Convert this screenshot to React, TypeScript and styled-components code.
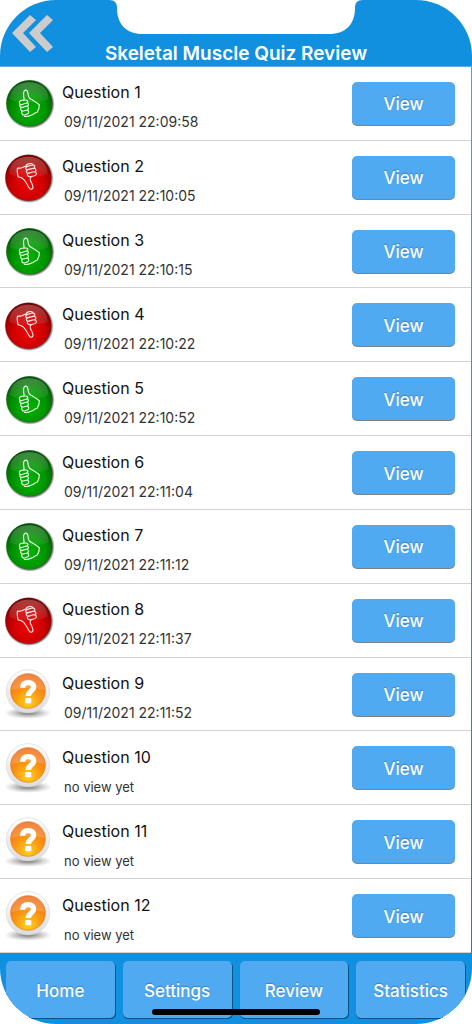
import React from "react";
import styled, { createGlobalStyle } from "styled-components";

const GlobalStyle = createGlobalStyle`
  * { box-sizing: border-box; }
  body { margin: 0; background: #fff; }
  body, button { font-family: Inter, "Liberation Sans", sans-serif; }
`;

const Screen = styled.div`
  position: relative;
  display: flex;
  flex-direction: column;
  min-height: 100vh;
  overflow: hidden;
  border-radius: 56px;
  background: #fff;
`;

const Header = styled.header`
  position: relative;
  display: flex;
  align-items: flex-end;
  justify-content: center;
  height: 67px;
  background: #1090de;
  border-bottom: 1px solid #58aee6;
`;

const Title = styled.h1`
  margin: 0;
  color: #fff;
  font-size: 19px;
  line-height: 24px;
  font-weight: 600;
  white-space: nowrap;
`;

const Notch = styled.svg`
  position: absolute;
  top: 0;
  left: 50%;
  transform: translateX(-50%);
`;

const BackButton = styled.button`
  position: absolute;
  left: 11px;
  top: 14px;
  padding: 0;
  border: 0;
  background: none;
  cursor: pointer;
  svg { display: block; }
`;

const List = styled.ul`
  display: flex;
  flex: 1;
  flex-direction: column;
  margin: 0;
  padding: 0;
  list-style: none;
  border-style: solid;
  border-width: 0 1px 0 0;
  border-image: linear-gradient(#4f9fdc, #4c6c96) 1;
`;

const Row = styled.li`
  display: flex;
  flex: 1;
  align-items: center;
  min-height: 70px;
  padding-right: 16px;
  border-bottom: 1px solid #d2d2d2;
`;

const StatusIcon = styled.svg`
  flex: none;
  width: 60px;
  height: 70px;
`;

const Details = styled.div`
  display: flex;
  flex: 1;
  flex-direction: column;
  gap: 8px;
  padding: 8px 0 0 2px;
`;

const Name = styled.span`
  color: #111;
  font-size: 16px;
  line-height: 22px;
`;

const Viewed = styled.span<{ $pending: boolean }>`
  padding-left: 2px;
  color: #333;
  font-size: ${(p) => (p.$pending ? 13 : 14)}px;
  line-height: 22px;
`;

const Button = styled.button`
  border: 0;
  border-radius: 5px;
  padding: 0;
  background: #50aaf2;
  color: #fff;
  font-size: 17px;
  font-weight: 500;
  text-shadow: 0 -1px 1px rgba(40, 90, 140, 0.5);
  cursor: pointer;
`;

const ViewButton = styled(Button)`
  width: 103px;
  height: 43px;
  padding-top: 2px;
  box-shadow: 0 1px 0 #7d8287;
`;

const Footer = styled.nav`
  display: flex;
  gap: 8px;
  height: 71px;
  padding: 8px 7px 6px 6px;
  background: #1090de;
`;

const TabButton = styled(Button)`
  flex: 1;
  padding-top: 3px;
  box-shadow: 0 1px 0 #0a5285, 1px 1px 0 #0a5285;
`;

const HomeIndicator = styled.div`
  position: absolute;
  bottom: 9px;
  left: 50%;
  width: 168px;
  height: 6px;
  border-radius: 3px;
  background: #000;
  transform: translateX(-50%);
`;

type Status = "right" | "wrong" | "open";

const Right = () => (
  <StatusIcon viewBox="0 -6 180 210" role="img" aria-label="Correct">
    <circle cx="90" cy="102" r="74" fill="url(#shade)" />
    <circle cx="88" cy="100" r="69" fill="url(#green)" />
    <path d="M30 88C31 52 58 37 88 37s57 15 58 51C117 103 59 103 30 88z" fill="url(#gloss)" />
    <g fill="none" stroke="#e8ffe8" strokeWidth="3.4" strokeLinejoin="round" strokeLinecap="round">
      <path d="M72 90c1-8-3-14-1-23 2-8 9-9 12-2 2 7 0 13 5 19 5 5 14 8 20 13l10 7c0 8-2 15-6 22-6 2-12 7-19 10-6 3-13 4-20 3" />
      <path d="M73 90c-6 0-15 2-15 8 0 5 5 7 10 5l12-4c6-3 4-9-2-9z" />
      <path d="M61 103c-4 5 0 10 6 9l14-4c7-2 5-9-1-9" />
      <path d="M63 113c-3 6 1 11 7 10l11-3c6-2 5-9 0-11" />
      <path d="M66 124c-3 6 2 12 8 11l8-3c6-2 5-9 0-12" />
    </g>
  </StatusIcon>
);

const Wrong = () => (
  <StatusIcon viewBox="0 -9 180 210" role="img" aria-label="Incorrect">
    <circle cx="87" cy="100" r="74" fill="url(#shade)" />
    <circle cx="85" cy="98" r="69" fill="url(#red)" />
    <path d="M27 86C28 50 55 35 85 35s57 15 58 51C114 101 56 101 27 86z" fill="url(#gloss)" />
    <g fill="none" stroke="#ffe8e8" strokeWidth="3.4" strokeLinejoin="round" strokeLinecap="round">
      <path d="M79 62c-6 2-10 6-16 7-4 1-7 0-11 1-1 8 0 16 2 25 6 2 12 3 17 8 7 7 11 17 17 26 3 6 12 4 11-3-1-8-6-14-8-21-1-4 0-7 2-10" />
      <path d="M92 95c-8 1-13-6-8-10l14-4c7-2 12 1 11 6-1 6-11 7-17 8z" />
      <path d="M84 85c-7-2-7-9 0-11l15-4c7-1 12 5 6 11" />
      <path d="M82 75c-6-2-7-9 0-11l14-4c8-1 11 5 6 10" />
      <path d="M79 65c-2-6 4-8 9-9 6-1 11 0 11 4" />
    </g>
  </StatusIcon>
);

const Open = () => (
  <StatusIcon viewBox="0 -2 180 210" role="img" aria-label="Not scored">
    <ellipse cx="84" cy="160" rx="72" ry="18" fill="url(#floor)" />
    <circle cx="84" cy="95" r="65" fill="url(#rim)" stroke="#d8d8d8" strokeWidth="2" />
    <circle cx="84" cy="94" r="52" fill="url(#orange)" stroke="#e47a1c" strokeWidth="2" />
    <path d="M34 92C36 60 56 44 84 44s48 16 50 48C109 83 59 83 34 92z" fill="#fff" opacity=".18" />
    <path d="M68 84c0-11 7-15 17-15s16 5 16 13c0 12-16 13-16 27" fill="none" stroke="#fff" strokeWidth="16" />
    <rect x="76" y="115" width="18" height="16" rx="3" fill="#fff" />
  </StatusIcon>
);

const icons: Record<Status, React.FC> = { right: Right, wrong: Wrong, open: Open };

const PaintDefs = styled.svg`
  position: absolute;
  width: 0;
  height: 0;
`;

const Paints = () => (
  <PaintDefs aria-hidden="true">
    <defs>
      <radialGradient id="shade">
        <stop offset=".88" stopColor="#222" stopOpacity=".9" />
        <stop offset="1" stopColor="#222" stopOpacity="0" />
      </radialGradient>
      <radialGradient id="green" cx=".5" cy=".65" r=".66">
        <stop offset="0" stopColor="#00b400" />
        <stop offset=".55" stopColor="#009400" />
        <stop offset="1" stopColor="#004c04" />
      </radialGradient>
      <radialGradient id="red" cx=".5" cy=".65" r=".66">
        <stop offset="0" stopColor="#ee0606" />
        <stop offset=".55" stopColor="#cc0000" />
        <stop offset="1" stopColor="#6c0000" />
      </radialGradient>
      <linearGradient id="gloss" x2="0" y2="1">
        <stop offset="0" stopColor="#fff" stopOpacity=".26" />
        <stop offset="1" stopColor="#fff" stopOpacity=".06" />
      </linearGradient>
      <radialGradient id="orange" cx=".5" cy=".85" r=".8">
        <stop offset="0" stopColor="#ffd21c" />
        <stop offset=".5" stopColor="#fb9612" />
        <stop offset="1" stopColor="#ee6a1c" />
      </radialGradient>
      <linearGradient id="rim" x2="0" y2="1">
        <stop offset="0" stopColor="#fff" />
        <stop offset="1" stopColor="#dcdcdc" />
      </linearGradient>
      <radialGradient id="floor">
        <stop offset="0" stopColor="#444" stopOpacity=".8" />
        <stop offset="1" stopColor="#888" stopOpacity="0" />
      </radialGradient>
    </defs>
  </PaintDefs>
);

const questions: { status: Status; viewed?: string }[] = [
  { status: "right", viewed: "09/11/2021 22:09:58" },
  { status: "wrong", viewed: "09/11/2021 22:10:05" },
  { status: "right", viewed: "09/11/2021 22:10:15" },
  { status: "wrong", viewed: "09/11/2021 22:10:22" },
  { status: "right", viewed: "09/11/2021 22:10:52" },
  { status: "right", viewed: "09/11/2021 22:11:04" },
  { status: "right", viewed: "09/11/2021 22:11:12" },
  { status: "wrong", viewed: "09/11/2021 22:11:37" },
  { status: "open", viewed: "09/11/2021 22:11:52" },
  { status: "open" },
  { status: "open" },
  { status: "open" },
];

const tabs = ["Home", "Settings", "Review", "Statistics"];

export default function App() {
  return (
    <Screen>
      <GlobalStyle />
      <Paints />
      <Header>
        <Notch width="254" height="35" viewBox="0 0 254 35" aria-hidden="true">
          <path d="M0 0C6 0 8 3 8 8c0 16 9 26 26 26h186c17 0 26-10 26-26 0-5 2-8 8-8z" fill="#fff" />
        </Notch>
        <BackButton aria-label="Back">
          <svg width="43" height="40" viewBox="0 0 43 40" fill="#ccc">
            <path d="M19 1l6 5-13 13 13 14-6 5L1 19z" />
            <path d="M36 1l6 5-13 13 13 14-6 5-18-19z" />
          </svg>
        </BackButton>
        <Title>Skeletal Muscle Quiz Review</Title>
      </Header>
      <List>
        {questions.map(({ status, viewed }, i) => {
          const Icon = icons[status];
          return (
            <Row key={i}>
              <Icon />
              <Details>
                <Name>Question {i + 1}</Name>
                <Viewed $pending={!viewed}>{viewed ?? "no view yet"}</Viewed>
              </Details>
              <ViewButton>View</ViewButton>
            </Row>
          );
        })}
      </List>
      <Footer>
        {tabs.map((tab) => (
          <TabButton key={tab}>{tab}</TabButton>
        ))}
      </Footer>
      <HomeIndicator />
    </Screen>
  );
}
